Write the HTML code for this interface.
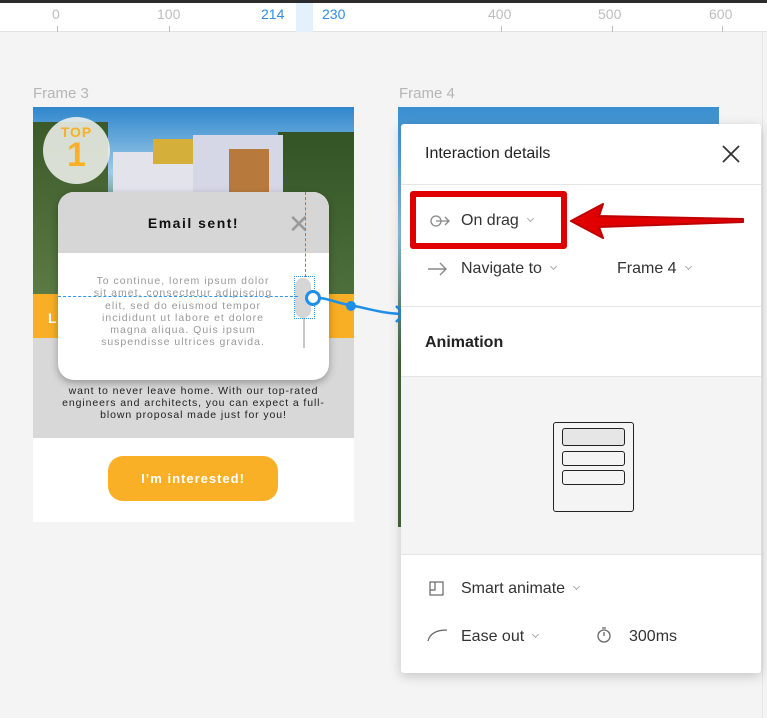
<!DOCTYPE html>
<html><head><meta charset="utf-8"><style>
*{margin:0;padding:0;box-sizing:border-box}
body{width:767px;height:718px;overflow:hidden;background:#f4f4f4;font-family:"Liberation Sans",sans-serif;position:relative}
.a{position:absolute}
.rl{font-size:14px;color:#bdbdbd;top:6px}
.tick{width:1px;height:6px;background:#bbb;top:26px}
.pt{font-size:16px;color:#333}
.chev{display:inline-block;width:5px;height:5px;border-right:1.2px solid #aaa;border-bottom:1.2px solid #aaa;transform:rotate(45deg);margin-left:9px;position:relative;top:-4px}
</style></head><body>
<div class="a" style="left:0;top:0;width:767px;height:3px;background:#2b2b2b"></div>
<div class="a" style="left:0;top:3px;width:767px;height:29px;background:#fff;border-bottom:1px solid #e3e3e3"></div>
<div class="a" style="left:296px;top:3px;width:17px;height:29px;background:#e3f1fd"></div>
<div class="a rl" style="left:52px">0</div>
<div class="a rl" style="left:157px">100</div>
<div class="a rl" style="left:261px;color:#2f8ee6">214</div>
<div class="a rl" style="left:322px;color:#2f8ee6">230</div>
<div class="a rl" style="left:488px">400</div>
<div class="a rl" style="left:598px">500</div>
<div class="a rl" style="left:709px">600</div>
<div class="a tick" style="left:57px"></div><div class="a tick" style="left:169px"></div>
<div class="a tick" style="left:501px"></div><div class="a tick" style="left:612px"></div><div class="a tick" style="left:722px"></div>
<div class="a" style="left:762px;top:32px;width:1px;height:686px;background:#e6e6e6"></div>

<div class="a" style="left:33px;top:85px;font-size:15px;color:#b5b5b5">Frame 3</div>
<div class="a" style="left:399px;top:85px;font-size:15px;color:#b5b5b5">Frame 4</div>

<div class="a" style="left:398px;top:107px;width:321px;height:420px;background:linear-gradient(#3a8fd0,#8ec3e8 30%,#3f6a32 60%)"></div>

<div class="a" style="left:33px;top:107px;width:321px;height:415px;background:#fff;overflow:hidden">
  <div class="a" style="left:0;top:0;width:321px;height:187px;background:linear-gradient(#2f86cc,#9fcbe9 35%,#5d7f48 60%,#7c7c7c)"></div>
  <div class="a" style="left:0;top:15px;width:75px;height:172px;background:linear-gradient(#3b5a2a,#5b7a44)"></div>
  <div class="a" style="left:245px;top:25px;width:76px;height:162px;background:linear-gradient(#335526,#4d6f3c)"></div>
  <div class="a" style="left:80px;top:45px;width:80px;height:50px;background:#e3e3ec"></div>
  <div class="a" style="left:160px;top:28px;width:90px;height:67px;background:#d5d6e6"></div>
  <div class="a" style="left:120px;top:32px;width:40px;height:25px;background:#d4b03a"></div>
  <div class="a" style="left:196px;top:42px;width:40px;height:50px;background:#b87a3c"></div>
  <div class="a" style="left:10px;top:10px;width:67px;height:67px;border-radius:50%;background:rgba(238,240,235,.88);text-align:center;color:#f9b026;font-weight:bold">
    <div style="font-size:14px;line-height:14px;margin-top:8px;letter-spacing:1px">TOP</div>
    <div style="font-size:34px;line-height:32px">1</div></div>
  <div class="a" style="left:0;top:187px;width:321px;height:44px;background:#f8ae25;color:#fff;font-weight:bold;font-size:14px;padding:16px 0 0 15px">L</div>
  <div class="a" style="left:0;top:231px;width:321px;height:100px;background:#d8d8d8;text-align:center;font-size:10.5px;letter-spacing:.9px;line-height:12px;color:#222;padding-top:47px">want to never leave home. With our top-rated<br>engineers and architects, you can expect a full-<br>blown proposal made just for you!</div>
  <div class="a" style="left:75px;top:349px;width:170px;height:45px;border-radius:15px;background:#f9b026;color:#fff;font-weight:bold;font-size:13px;letter-spacing:1px;text-align:center;line-height:45px">I’m interested!</div>
</div>

<div class="a" style="left:58px;top:192px;width:271px;height:188px;border-radius:16px;background:#fff;overflow:hidden;box-shadow:0 3px 8px rgba(0,0,0,.3)">
  <div style="height:61px;background:#d6d6d6;text-align:center;font-weight:bold;font-size:14px;letter-spacing:1.5px;line-height:62px;color:#111">Email sent!</div>
  <div class="a" style="left:230px;top:22px;font-size:26px;color:#999;line-height:20px">✕</div>
  <div class="a" style="left:20px;top:83px;width:210px;text-align:center;font-size:10.5px;letter-spacing:1px;line-height:12.3px;color:#999;white-space:nowrap">To continue, lorem ipsum dolor<br>sit amet, consectetur adipiscing<br>elit, sed do eiusmod tempor<br>incididunt ut labore et dolore<br>magna aliqua. Quis ipsum<br>suspendisse ultrices gravida.</div>
  <div class="a" style="left:237px;top:86px;width:16px;height:40px;border-radius:8px;background:#d6d6d6"></div>
  <div class="a" style="left:245px;top:126px;width:2px;height:30px;background:#c8c8c8"></div>
</div>
<div class="a" style="left:305px;top:192px;height:85px;border-left:1.5px dashed #2f96e8"></div>
<div class="a" style="left:58px;top:296px;width:240px;border-top:1.5px dashed #2f96e8"></div>
<div class="a" style="left:294px;top:276px;width:21px;height:43px;border:1.5px dotted #2f96e8"></div>
<svg class="a" style="left:300px;top:284px" width="110" height="45"><circle cx="13" cy="14" r="6.5" fill="#fff" stroke="#1e8fe8" stroke-width="3"/><path d="M20 14 C30 15 40 20 50 21 C70 25 85 30 104 30" fill="none" stroke="#1e8fe8" stroke-width="2.5"/><circle cx="51" cy="22" r="5" fill="#1e8fe8"/><path d="M96 22 L104 30 L96 38" fill="none" stroke="#1e8fe8" stroke-width="2.5"/></svg>

<div class="a" style="left:401px;top:124px;width:360px;height:549px;background:#fff;border-radius:3px;box-shadow:0 3px 12px rgba(0,0,0,.2)">
  <div class="a" style="left:24px;top:21px;font-size:16px;color:#222">Interaction details</div>
  <svg class="a" style="left:321px;top:21px" width="18" height="18"><path d="M1 1L17 17M17 1L1 17" stroke="#333" stroke-width="1.8"/></svg>
  <div class="a" style="left:0;top:60px;width:360px;height:1px;background:#e5e5e5"></div>
  <svg class="a" style="left:29px;top:90px" width="22" height="14"><circle cx="6" cy="7" r="5" fill="none" stroke="#888" stroke-width="1.3"/><path d="M6 7H19M15 3L19 7L15 11" fill="none" stroke="#888" stroke-width="1.3"/></svg>
  <div class="a pt" style="left:60px;top:88px">On drag<span class="chev"></span></div>
  <svg class="a" style="left:26px;top:138px" width="22" height="14"><path d="M1 7H19M13 1L19 7L13 13" fill="none" stroke="#888" stroke-width="1.4"/></svg>
  <div class="a pt" style="left:60px;top:136px">Navigate to<span class="chev"></span></div>
  <div class="a pt" style="left:216px;top:136px">Frame 4<span class="chev"></span></div>
  <div class="a" style="left:0;top:182px;width:360px;height:1px;background:#e5e5e5"></div>
  <div class="a" style="left:24px;top:210px;font-size:16px;color:#222;font-weight:bold">Animation</div>
  <div class="a" style="left:0;top:252px;width:360px;height:179px;background:#f4f4f4;border-top:1px solid #e5e5e5;border-bottom:1px solid #e5e5e5"></div>
  <div class="a" style="left:152px;top:298px;width:81px;height:90px;border:1.3px solid #222;border-radius:3px"></div>
  <div class="a" style="left:161px;top:304px;width:63px;height:18px;border:1.2px solid #222;border-radius:3px;background:#e6e6e6"></div>
  <div class="a" style="left:161px;top:327px;width:63px;height:15px;border:1.2px solid #222;border-radius:3px"></div>
  <div class="a" style="left:161px;top:346px;width:63px;height:15px;border:1.2px solid #222;border-radius:3px"></div>
  <svg class="a" style="left:28px;top:457px" width="16" height="16"><rect x="1" y="1" width="13" height="13" fill="none" stroke="#666" stroke-width="1.2"/><path d="M1 9H6V1" fill="none" stroke="#666" stroke-width="1.2"/></svg>
  <div class="a pt" style="left:60px;top:456px">Smart animate<span class="chev"></span></div>
  <svg class="a" style="left:26px;top:504px" width="22" height="14"><path d="M1 13C3 5 10 2 20 2" fill="none" stroke="#666" stroke-width="1.3"/></svg>
  <div class="a pt" style="left:60px;top:504px">Ease out<span class="chev"></span></div>
  <svg class="a" style="left:195px;top:502px" width="16" height="18"><circle cx="8" cy="10" r="6" fill="none" stroke="#666" stroke-width="1.3"/><path d="M8 10V6M6 2H10" stroke="#666" stroke-width="1.3"/></svg>
  <div class="a pt" style="left:228px;top:504px">300ms</div>
</div>

<div class="a" style="left:410px;top:191px;width:157px;height:58px;border:6px solid #e00000;border-radius:3px"></div>
<svg class="a" style="left:565px;top:200px" width="182" height="42"><path d="M6 21 L38 4 L34 16 L178 19 L178 22 L34 27 L38 38 Z" fill="#e00000" stroke="#c00000" stroke-width="2" stroke-linejoin="round"/></svg>
</body></html>
